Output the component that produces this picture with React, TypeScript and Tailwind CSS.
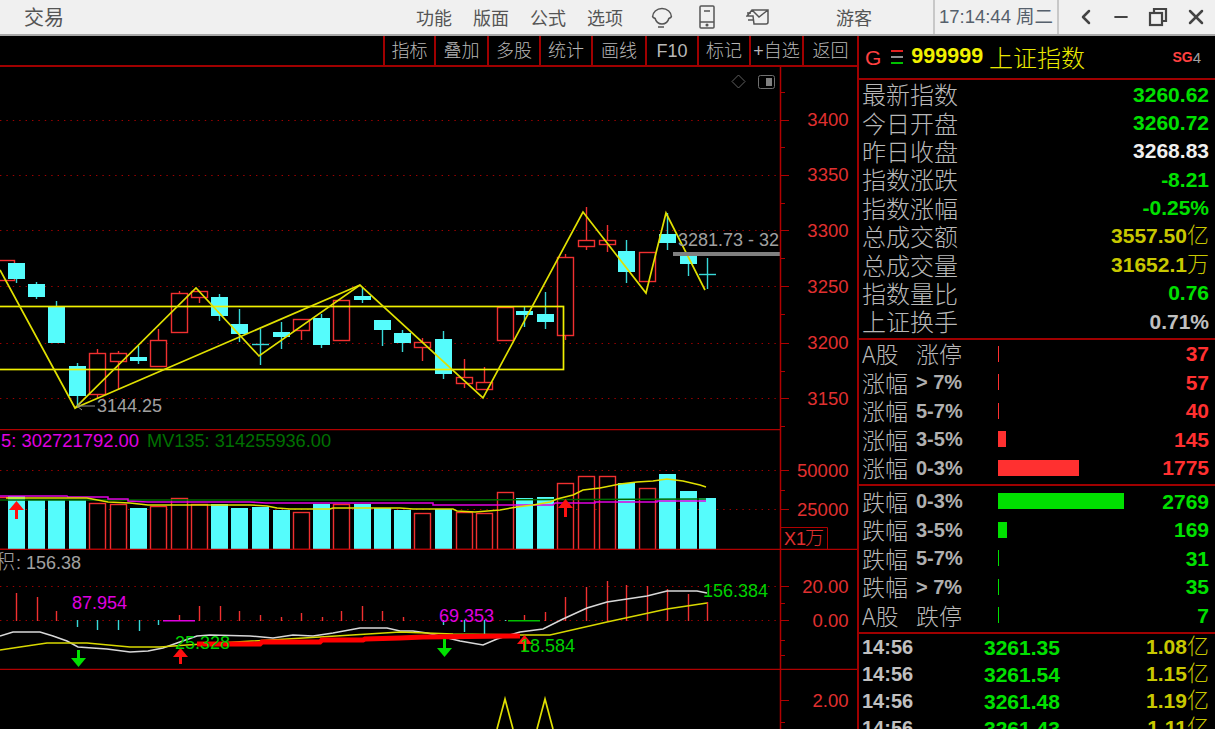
import { ChevronLeft, Minus, X } from 'lucide-react';

const SANS = 'Liberation Sans, sans-serif';
const CJK = 'Noto Sans CJK SC, sans-serif';
const NUM = 'Liberation Sans, Noto Sans CJK SC, sans-serif';
const RED = '#f03030';
const CYAN = '#55fcfc';
const CYAN_LINE = '#38d8d8';
const AXIS = '#b00000';
const GRID = '#a00000';
const LABEL = '#e03030';

// x, wick top, body top, body bottom, wick bottom, up
const candles: [number, number, number, number, number, boolean][] = [
  [-2, 260, 260, 280, 280, true],
  [8, 263, 263, 279, 283, false],
  [28, 282, 284, 297, 299, false],
  [48, 301, 307, 343, 343, false],
  [69, 363, 366, 396, 405, false],
  [89, 349, 353, 394, 398, true],
  [110, 351, 353, 361, 390, true],
  [130, 346, 357, 361, 364, false],
  [150, 329, 340, 366, 366, true],
  [171, 291, 293, 332, 332, true],
  [191, 291, 291, 297, 303, true],
  [211, 294, 297, 316, 321, false],
  [231, 309, 324, 334, 342, false],
  [252, 329, 344, 344, 365, false],
  [273, 322, 332, 337, 349, false],
  [293, 319, 319, 330, 340, true],
  [313, 314, 318, 345, 348, false],
  [333, 300, 300, 340, 340, true],
  [354, 288, 296, 300, 303, false],
  [374, 320, 320, 330, 346, false],
  [394, 330, 333, 343, 352, false],
  [414, 338, 342, 347, 361, true],
  [435, 331, 339, 374, 379, false],
  [456, 359, 377, 383, 388, true],
  [476, 367, 382, 389, 389, true],
  [497, 307, 307, 340, 340, true],
  [516, 307, 311, 315, 327, false],
  [537, 292, 314, 322, 329, false],
  [557, 254, 257, 335, 340, true],
  [578, 207, 240, 246, 250, true],
  [599, 225, 240, 244, 252, true],
  [618, 240, 251, 272, 283, false],
  [639, 252, 252, 281, 281, true],
  [659, 213, 234, 243, 250, false],
  [680, 256, 256, 264, 276, false],
  [699, 258, 274, 274, 289, false],
];

// x, top, up
const volumes: [number, number, boolean][] = [
  [-2, 497, true], [8, 496, false], [28, 500, false], [48, 500, false], [69, 500, false],
  [89, 503, true], [110, 504, true], [130, 508, false], [150, 506, true], [171, 498, true],
  [191, 504, true], [211, 504, false], [231, 508, false], [252, 507, false], [273, 510, false],
  [293, 512, true], [313, 504, false], [333, 504, true], [354, 504, false], [374, 508, false],
  [394, 510, false], [414, 513, true], [435, 509, false], [456, 512, true], [476, 513, true],
  [497, 492, true], [516, 498, false], [537, 497, false], [557, 483, true], [578, 476, true],
  [599, 476, true], [618, 483, false], [639, 488, true], [659, 474, false], [680, 491, false],
  [699, 498, false],
];

const macdUp: [number, number][] = [
  [16, 593], [37, 597], [56, 611], [179, 615], [199, 606], [220, 606], [239, 611], [260, 615],
  [281, 617], [301, 613], [322, 617], [341, 611], [362, 606], [382, 611], [403, 617], [524, 615],
  [545, 612], [565, 597], [586, 587], [607, 581], [626, 585], [647, 586], [667, 589], [688, 594],
  [707, 602],
];
const macdDown: [number, number][] = [
  [77, 627], [97, 630], [118, 630], [139, 631], [158, 625], [443, 625], [464, 632], [484, 634], [505, 621],
];

const statsTop = [
  ['最新指数', '3260.62', '', 'text-[#00e000]'],
  ['今日开盘', '3260.72', '', 'text-[#00e000]'],
  ['昨日收盘', '3268.83', '', 'text-[#f0f0f0]'],
  ['指数涨跌', '-8.21', '', 'text-[#00e000]'],
  ['指数涨幅', '-0.25%', '', 'text-[#00e000]'],
  ['总成交额', '3557.50', '亿', 'text-[#c8c800]'],
  ['总成交量', '31652.1', '万', 'text-[#c8c800]'],
  ['指数量比', '0.76', '', 'text-[#00e000]'],
  ['上证换手', '0.71%', '', 'text-[#c0c0c0]'],
];

const riseRows: [string, string, number, string][] = [
  ['A股', '涨停', 1, '37'],
  ['涨幅', '> 7%', 1, '57'],
  ['涨幅', '5-7%', 1, '40'],
  ['涨幅', '3-5%', 8, '145'],
  ['涨幅', '0-3%', 81, '1775'],
];
const fallRows: [string, string, number, string][] = [
  ['跌幅', '0-3%', 126, '2769'],
  ['跌幅', '3-5%', 9, '169'],
  ['跌幅', '5-7%', 1, '31'],
  ['跌幅', '> 7%', 1, '35'],
  ['A股', '跌停', 1, '7'],
];
const ticks = [
  ['14:56', '3261.35', '1.08'],
  ['14:56', '3261.54', '1.15'],
  ['14:56', '3261.48', '1.19'],
  ['14:56', '3261.43', '1.11'],
];

function Dots({ y }: { y: number }) {
  return <line x1={0} x2={780} y1={y + 0.5} y2={y + 0.5} stroke={GRID} strokeDasharray="1.4 5" />;
}

function T({ x, y, fill, w, children }: { x: number; y: number; fill: string; w?: number; children: string }) {
  return (
    <text x={x} y={y} fill={fill} fontSize={18} fontFamily={SANS} textLength={w} lengthAdjust={w ? 'spacingAndGlyphs' : undefined}>
      {children}
    </text>
  );
}

function AxisLabel({ y, children }: { y: number; children: string }) {
  return (
    <text x={848.5} y={y + 6.5} textAnchor="end" fill={LABEL} fontSize={18.5} fontFamily={SANS}>
      {children}
    </text>
  );
}

function Tick({ y, major }: { y: number; major?: boolean }) {
  return <line x1={781} x2={major ? 789 : 785} y1={y + 0.5} y2={y + 0.5} stroke={AXIS} />;
}

function Arrow({ x, top, bottom, color, down }: { x: number; top: number; bottom: number; color: string; down?: boolean }) {
  if (down) {
    return (
      <g>
        <rect x={x - 1} y={top} width={3} height={bottom - top - 8} fill={color} />
        <polygon points={`${x - 7},${bottom - 9} ${x + 8},${bottom - 9} ${x + 0.5},${bottom}`} fill={color} />
      </g>
    );
  }
  return (
    <g>
      <rect x={x - 1} y={top + 8} width={3} height={bottom - top - 8} fill={color} />
      <polygon points={`${x - 7},${top + 9} ${x + 8},${top + 9} ${x + 0.5},${top}`} fill={color} />
    </g>
  );
}

function Panel({ top, height, children }: { top: number; height: number; children: React.ReactNode }) {
  return (
    <svg width={857} height={height} viewBox={`0 ${top} 857 ${height}`} className="block shrink-0">
      {children}
      <line x1={780.5} x2={780.5} y1={top} y2={top + height} stroke={AXIS} strokeWidth={1.5} />
    </svg>
  );
}

function PricePanel() {
  const major = [120, 175, 230, 286, 343, 398];
  return (
    <Panel top={67} height={362}>
      {major.map((y) => <Dots key={y} y={y} />)}
      {[92, 120, 147, 175, 203, 230, 258, 286, 314, 343, 371, 398, 426].map((y) => (
        <Tick key={y} y={y} major={major.includes(y)} />
      ))}
      <AxisLabel y={119}>3400</AxisLabel>
      <AxisLabel y={174}>3350</AxisLabel>
      <AxisLabel y={230}>3300</AxisLabel>
      <AxisLabel y={286}>3250</AxisLabel>
      <AxisLabel y={342}>3200</AxisLabel>
      <AxisLabel y={398}>3150</AxisLabel>

      <polygon points="738.5,75 745,81.5 738.5,88 732,81.5" fill="none" stroke="#606060" />
      <rect x={758.5} y={75.5} width={16} height={13} rx={2} fill="none" stroke="#707070" />
      <rect x={766} y={78} width={6} height={8} fill="#808080" />

      {candles.map(([x, wt, bt, bb, wb, up]) => {
        const flat = bt === bb;
        return (
          <g key={x}>
            <line x1={x + 8.5} x2={x + 8.5} y1={wt} y2={wb} stroke={up ? RED : CYAN_LINE} strokeWidth={1.4} />
            {up ? (
              <rect x={x + 0.5} y={bt + 0.5} width={16} height={bb - bt} fill="#000" stroke={RED} strokeWidth={1.4} />
            ) : flat ? (
              <line x1={x} x2={x + 17} y1={bt + 0.5} y2={bt + 0.5} stroke={CYAN_LINE} strokeWidth={1.4} />
            ) : (
              <rect x={x} y={bt} width={17} height={bb - bt} fill={CYAN} />
            )}
          </g>
        );
      })}

      <rect x={-2} y={306.5} width={565.5} height={63} fill="none" stroke="#f0f000" strokeWidth={1.7} />
      <polyline
        points="0,270 75,408 196,288 259,356 360,285 483,398 583,212 646,293 666,213 705,290"
        fill="none"
        stroke="#e0e000"
        strokeWidth={1.7}
      />
      <line x1={75} y1={408} x2={360} y2={285} stroke="#e0e000" strokeWidth={1.7} />

      <path d="M77 406 H95 M77 406 L82 402 M77 406 L82 410" stroke="#909090" fill="none" />
      <T x={97} y={412} fill="#a0a0a0">3144.25</T>
      <T x={678} y={246} fill="#a0a0a0">3281.73 - 32</T>
      <rect x={673} y={252} width={107} height={4} fill="#808080" />
    </Panel>
  );
}

function VolumePanel() {
  return (
    <Panel top={429} height={121}>
      <line x1={0} x2={781} y1={429.5} y2={429.5} stroke={AXIS} strokeWidth={1.5} />
      <Dots y={470} />
      <Dots y={509} />
      <T x={1} y={447} fill="#e000e0" w={138}>5: 302721792.00</T>
      <T x={147} y={447} fill="#007000" w={184}>MV135: 314255936.00</T>
      {volumes.map(([x, top, up]) =>
        up ? (
          <rect key={x} x={x + 0.5} y={top + 0.5} width={16} height={549 - top} fill="#000" stroke={RED} strokeWidth={1.4} />
        ) : (
          <rect key={x} x={x} y={top} width={17} height={549 - top} fill={CYAN} />
        ),
      )}
      <polyline points="0,500 130,500 400,500 700,499 706,499" fill="none" stroke="#006800" strokeWidth={1.5} />
      <polyline
        points="0,496 67,496 68,497 108,497 108,499 128,499 128,501 148,502 250,502 266,503 400,503 433,503 433,505 553,505 555,503 595,503 595,502 657,502 657,501 706,501"
        fill="none"
        stroke="#e000e0"
        strokeWidth={1.5}
      />
      <polyline
        points="6,498 87,498 108,502 130,503 148,505 250,505 267,506 277,508 290,509 330,509 333,508 400,508 413,509 453,509 457,511 475,512 500,510 517,507 533,505 550,502 557,499 573,495 583,490 600,488 620,484 637,482 653,481 667,479 683,481 700,485 706,487"
        fill="none"
        stroke="#e0e000"
        strokeWidth={1.5}
      />
      <Arrow x={16} top={501} bottom={519} color="#ff1010" />
      <Arrow x={565} top={499} bottom={517} color="#ff1010" />
      <line x1={0} x2={857} y1={549.5} y2={549.5} stroke={AXIS} strokeWidth={1.5} />
      <Tick y={470} major />
      <Tick y={490} />
      <Tick y={509} major />
      <AxisLabel y={470}>50000</AxisLabel>
      <AxisLabel y={509}>25000</AxisLabel>
      <path d="M781 527.5 H827.5 V549" fill="none" stroke={AXIS} />
      <text x={784} y={545} fill={LABEL} fontSize={18} fontFamily={SANS}>X1</text>
      <text x={805} y={545} fill={LABEL} fontSize={19} fontFamily={CJK} fontWeight={300}>万</text>
    </Panel>
  );
}

function MacdPanel() {
  return (
    <Panel top={550} height={120}>
      <text x={-5} y={569} fill="#a0a0a0" fontSize={20} fontFamily={CJK} fontWeight={300}>积</text>
      <T x={16} y={569} fill="#a0a0a0">:</T>
      <T x={26} y={569} fill="#a0a0a0">156.38</T>
      <Dots y={586} />
      <Dots y={620} />
      {macdUp.map(([x, y]) => <line key={x} x1={x + 0.5} x2={x + 0.5} y1={y} y2={621} stroke={RED} strokeWidth={1.4} />)}
      {macdDown.map(([x, y]) => <line key={x} x1={x + 0.5} x2={x + 0.5} y1={620} y2={y} stroke={CYAN_LINE} strokeWidth={1.4} />)}
      <rect x={163} y={620} width={32} height={1.5} fill="#e000e0" />
      <rect x={508} y={620} width={32} height={1.5} fill="#00c000" />
      <T x={72} y={609} fill="#e000e0">87.954</T>
      <T x={439} y={622} fill="#e000e0">69.353</T>
      <polyline
        points="0,636 13,632 40,632 53,636 67,641 78,647 107,649 130,652 148,651 163,648 177,643 197,636 210,635 250,636 273,638 293,635 313,636 333,633 360,628 387,628 400,631 413,631 427,633 460,641 483,645 497,639 520,632 543,629 563,619 587,608 607,602 627,599 647,596 667,591 697,591 707,593"
        fill="none"
        stroke="#d8d8d8"
        strokeWidth={1.5}
      />
      <polyline
        points="0,650 20,647 47,643 87,643 130,647 160,647 187,645 320,637 400,632 453,634 520,635 550,635 607,622 667,609 707,603"
        fill="none"
        stroke="#d8d800"
        strokeWidth={1.5}
      />
      <polyline
        points="197,644 260,644 262,642 320,642 322,640 363,640 365,639 400,638 423,637 520,636"
        fill="none"
        stroke="#ff0000"
        strokeWidth={5}
      />
      <Arrow x={78} top={650} bottom={667} color="#00e000" down />
      <Arrow x={180} top={648} bottom={664} color="#ff1010" />
      <Arrow x={444} top={639} bottom={657} color="#00e000" down />
      <Arrow x={524} top={635} bottom={652} color="#ff1010" />
      <T x={175} y={649} fill="#00d000">25.328</T>
      <T x={520} y={652} fill="#00d000">18.584</T>
      <T x={703} y={597} fill="#00d000">156.384</T>
      <line x1={0} x2={857} y1={669.5} y2={669.5} stroke={AXIS} strokeWidth={1.5} />
      <Tick y={586} major />
      <Tick y={603} />
      <Tick y={620} major />
      <Tick y={640} />
      <Tick y={655} />
      <AxisLabel y={586}>20.00</AxisLabel>
      <AxisLabel y={620}>0.00</AxisLabel>
    </Panel>
  );
}

function BottomPanel() {
  return (
    <Panel top={670} height={59}>
      <polyline points="497,729 505,699 513,729" fill="none" stroke="#e0e000" strokeWidth={1.7} />
      <polyline points="537,729 545,699 553,729" fill="none" stroke="#e0e000" strokeWidth={1.7} />
      <Tick y={700} major />
      <Tick y={722} />
      <AxisLabel y={700}>2.00</AxisLabel>
    </Panel>
  );
}

function TitleBar() {
  return (
    <div className="flex h-9 shrink-0 items-center border-b-2 border-[#a8a8a8] bg-[#f0f0f0] text-[#555]" style={{ fontFamily: CJK }}>
      <span className="ml-6 text-[20px]">交易</span>
      <div className="ml-[352px] flex gap-[21px] text-[18px]">
        <span>功能</span>
        <span>版面</span>
        <span>公式</span>
        <span>选项</span>
      </div>
      {/* headset */}
      <svg width="22" height="22" viewBox="0 0 22 22" fill="none" stroke="#555" strokeWidth="1.5" className="ml-[28px]">
        <path d="M1.5 11a9.5 8.5 0 0 1 19 0" />
        <path d="M1.5 11l2.5 1.5M20.5 11L18 12.5" />
        <path d="M4 12c1 4 4 6 7 6s6-2 7-6" />
        <path d="M7 21h6" />
      </svg>
      <svg width="16" height="24" viewBox="0 0 16 24" fill="none" stroke="#555" strokeWidth="1.5" className="ml-[26px]">
        <rect x="1" y="1" width="14" height="22" rx="1" />
        <path d="M1 17h14M5 6h6" />
        <circle cx="8" cy="20" r="0.8" fill="#555" />
      </svg>
      {/* mail with speed lines */}
      <svg width="24" height="18" viewBox="0 0 24 18" fill="none" stroke="#555" strokeWidth="1.5" className="ml-[31px]">
        <path d="M6 2h16v12a2 2 0 0 1-2 2H8l-1-8H1zM6 2l7 7 9-7" />
        <path d="M1 5h4M2 12h5" />
      </svg>
      <span className="ml-[66px] text-[18px]">游客</span>
      <div
        className="ml-[61px] flex h-full w-[126px] items-center justify-center whitespace-nowrap border-x-2 border-[#c8c8c8] text-[18.5px] text-[#56606c]"
        style={{ fontFamily: NUM }}
      >
        17:14:44 周二
      </div>
      <div className="flex flex-1 items-center text-[#444]">
        <ChevronLeft size={24} strokeWidth={2.5} className="ml-[15px]" />
        <Minus size={20} strokeWidth={2.5} className="ml-[13px]" />
        <svg width="20" height="20" viewBox="0 0 20 20" fill="none" stroke="#444" strokeWidth="2.2" className="ml-[17px]">
          <rect x="2" y="6" width="12" height="12" />
          <path d="M6 6V2h12v12h-4" />
        </svg>
        <X size={24} strokeWidth={2.5} className="ml-[16px]" />
      </div>
    </div>
  );
}

function Toolbar() {
  const items = [
    ['指标', 51], ['叠加', 53], ['多股', 52], ['统计', 52], ['画线', 54],
    ['F10', 52], ['标记', 52], ['+自选', 53], ['返回', 55],
  ] as const;
  return (
    <div className="flex h-[31px] shrink-0 justify-end border-b-2 border-[#a00000] text-[18px] font-light text-[#b8b8b8]">
      {items.map(([label, w]) => (
        <div
          key={label}
          className="flex items-center justify-center whitespace-nowrap border-l-2 border-[#a00000] pt-[1px]"
          style={{ width: w, fontFamily: NUM }}
        >
          {label}
        </div>
      ))}
    </div>
  );
}

function BreadthRow({ row, color, fill }: { row: [string, string, number, string]; color: string; fill: string }) {
  const [name, range, width, count] = row;
  const ascii = /%/.test(range);
  return (
    <div className="flex h-[28.5px] items-center">
      <span className="block w-[54px] whitespace-nowrap text-[23px] font-light leading-none text-[#b8b8b8]">{name}</span>
      {ascii ? (
        <span className="block w-[82px] whitespace-nowrap text-[20px] font-bold leading-none text-[#b0b0b0]" style={{ fontFamily: SANS }}>
          {range}
        </span>
      ) : (
        <span className="block w-[82px] whitespace-nowrap text-[23px] font-light leading-none text-[#b8b8b8]">{range}</span>
      )}
      <div className="flex-1">
        <div className={`h-4 ${fill}`} style={{ width }} />
      </div>
      <span className={`block text-[21px] font-bold leading-none ${color}`} style={{ fontFamily: SANS }}>{count}</span>
    </div>
  );
}

function SidePanel() {
  return (
    <div className="flex-1 overflow-hidden border-l-2 border-[#a00000]" style={{ fontFamily: CJK }}>
      <div className="flex h-[44px] items-center border-b-2 border-[#a00000]">
        <span className="ml-[6px] block text-[21px] leading-none text-[#ff4040]" style={{ fontFamily: SANS }}>G</span>
        <div className="ml-[10px] flex w-3 flex-col gap-[4px]">
          <div className="h-0.5 bg-[#e02020]" />
          <div className="h-0.5 bg-[#909090]" />
          <div className="h-0.5 bg-[#00c000]" />
        </div>
        <span className="ml-[8px] block text-[21.5px] font-bold leading-none text-[#f0f000]" style={{ fontFamily: SANS }}>999999</span>
        <span className="ml-[6px] block text-[24px] font-light leading-none text-[#e8e800]">上证指数</span>
        <span className="ml-auto block text-[14px] font-bold leading-none text-[#ff4040]" style={{ fontFamily: SANS }}>SG</span>
        <span className="mr-[14px] block text-[15px] leading-none text-[#a0a0a0]" style={{ fontFamily: SANS }}>4</span>
      </div>
      <div className="border-b-2 border-[#a00000] pb-[2px] pl-[3px] pr-[6px]">
        {statsTop.map(([name, value, unit, color]) => (
          <div key={name} className="flex h-[28.4px] items-center justify-between">
            <span className="block text-[24px] font-light leading-none text-[#b8b8b8]">{name}</span>
            <span className={`block text-[21px] font-bold leading-none ${color}`} style={{ fontFamily: NUM }}>
              {value}
              {unit && <span className="text-[22px] font-light">{unit}</span>}
            </span>
          </div>
        ))}
      </div>
      <div className="border-b-2 border-[#a00000] pb-[2px] pl-[3px] pr-[6px]">
        {riseRows.map((r) => <BreadthRow key={r[3]} row={r} color="text-[#ff3030]" fill="bg-[#ff3030]" />)}
      </div>
      <div className="border-b-2 border-[#a00000] pb-[2px] pl-[3px] pr-[6px] pt-[1px]">
        {fallRows.map((r) => <BreadthRow key={r[3]} row={r} color="text-[#00e000]" fill="bg-[#00e000]" />)}
      </div>
      <div className="pl-[3px] pr-[6px]">
        {ticks.map(([time, price, amount], i) => (
          <div key={i} className="flex h-[27px] items-center font-bold leading-none" style={{ fontFamily: NUM }}>
            <span className="block w-[122px] text-[20px] text-[#c0c0c0]">{time}</span>
            <span className="block text-[21px] text-[#00e000]">{price}</span>
            <span className="ml-auto block text-[21px] text-[#c8c800]">
              {amount}
              <span className="text-[22px] font-light">亿</span>
            </span>
          </div>
        ))}
      </div>
    </div>
  );
}

export default function App() {
  return (
    <div className="flex h-[729px] w-[1215px] flex-col overflow-hidden bg-black">
      <TitleBar />
      <div className="flex min-h-0 flex-1">
        <div className="flex w-[857px] shrink-0 flex-col">
          <Toolbar />
          <PricePanel />
          <VolumePanel />
          <MacdPanel />
          <BottomPanel />
        </div>
        <SidePanel />
      </div>
    </div>
  );
}
